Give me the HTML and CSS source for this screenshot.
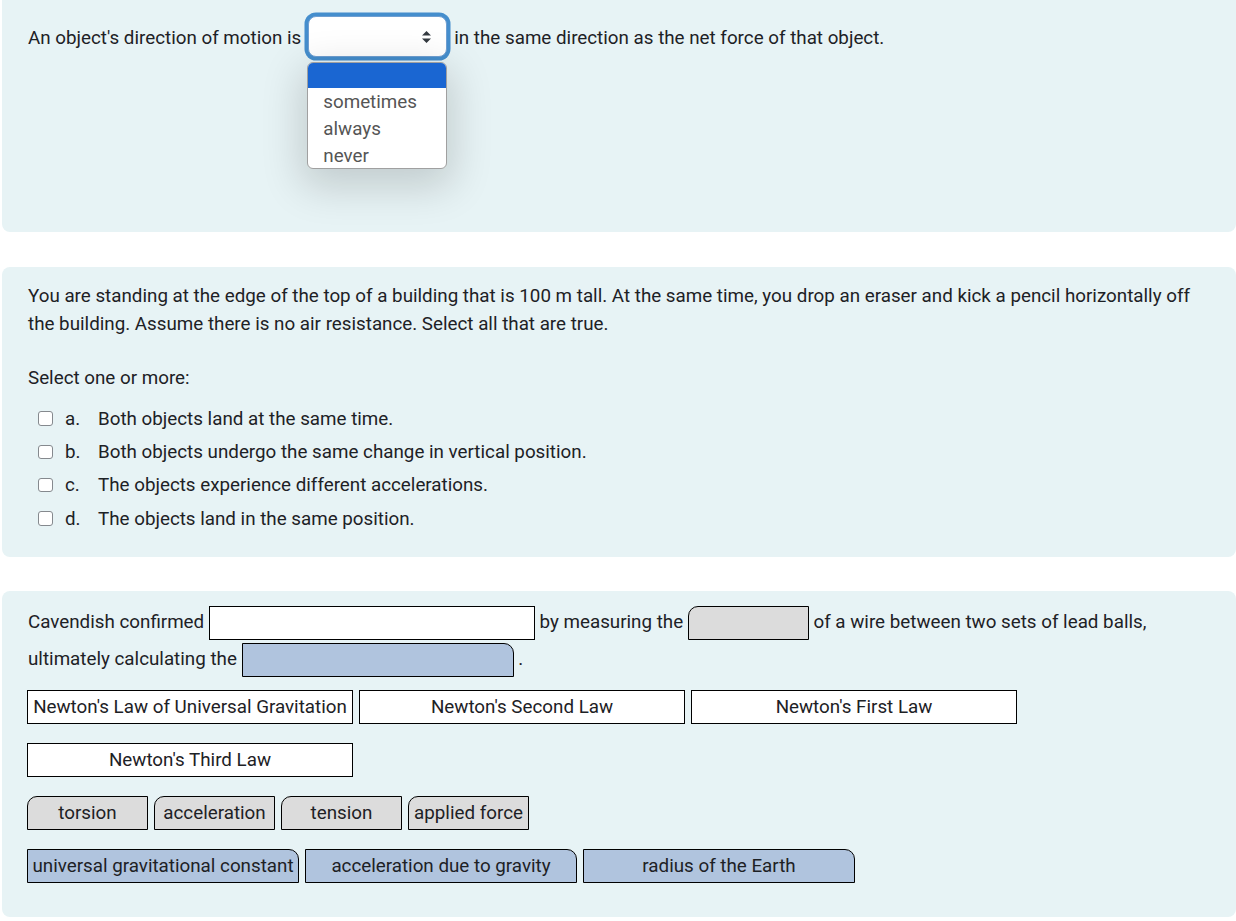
FILE: index.html
```html
<!DOCTYPE html>
<html lang="en">
<head>
  <meta charset="UTF-8" />
  <meta name="viewport" content="width=device-width, initial-scale=1.0"/>
  <title>Quiz</title>
  <link rel="stylesheet" href="styles.css">
</head>
<body>

  <!-- Question 1: select menu -->
  <div class="que que-first">
    <div class="formulation">
      An object's direction of motion is<span class="select-wrap"><span class="select"><svg class="arrows" width="9" height="12" viewBox="0 0 9 12"><path d="M4.5 0 L9 4.6 L0 4.6 Z M0 7.4 L9 7.4 L4.5 12 Z" fill="#343a40"/></svg></span><ul class="dropdown">
          <li class="active"></li>
          <li>sometimes</li>
          <li>always</li>
          <li>never</li>
        </ul></span>in the same direction as the net force of that object.
    </div>
  </div>

  <!-- Question 2: multiple choice -->
  <div class="que que-mid">
    <div class="formulation">
      <p class="qtext">You are standing at the edge of the top of a building that is 100 m tall. At the same time, you drop an eraser and kick a pencil horizontally off the building. Assume there is no air resistance. Select all that are true.</p>
      <p class="prompt">Select one or more:</p>
      <div class="answer">
        <div class="opt"><span class="check"></span><span class="letter">a.</span><span>Both objects land at the same time.</span></div>
        <div class="opt"><span class="check"></span><span class="letter">b.</span><span>Both objects undergo the same change in vertical position.</span></div>
        <div class="opt"><span class="check"></span><span class="letter">c.</span><span>The objects experience different accelerations.</span></div>
        <div class="opt"><span class="check"></span><span class="letter">d.</span><span>The objects land in the same position.</span></div>
      </div>
    </div>
  </div>

  <!-- Question 3: drag words into text -->
  <div class="que que-last">
    <div class="formulation">
      <p class="ddtext">Cavendish confirmed <span class="drop group1"></span> by measuring the <span class="drop group2"></span> of a wire between two sets of lead balls, ultimately calculating the <span class="drop group3"></span> .</p>
      <div class="draghomes">
        <div class="dragrow">
          <span class="drag group1">Newton's Law of Universal Gravitation</span>
          <span class="drag group1">Newton's Second Law</span>
          <span class="drag group1">Newton's First Law</span>
        </div>
        <div class="dragrow">
          <span class="drag group1">Newton's Third Law</span>
        </div>
        <div class="dragrow">
          <span class="drag group2">torsion</span>
          <span class="drag group2">acceleration</span>
          <span class="drag group2">tension</span>
          <span class="drag group2">applied force</span>
        </div>
        <div class="dragrow">
          <span class="drag group3">universal gravitational constant</span>
          <span class="drag group3">acceleration due to gravity</span>
          <span class="drag group3">radius of the Earth</span>
        </div>
      </div>
    </div>
  </div>

</body>
</html>
```

FILE: styles.css
```css
* { margin: 0; padding: 0; box-sizing: border-box; }
body {
  background: #fff; color: #1d2125; padding: 0 0 0 2px;
  font-family: Roboto, "Noto Sans", sans-serif; font-size: 18.8px; line-height: 28px;
}

.que {
  background: #e7f3f5; border-radius: 8px; margin-bottom: 35px;
  padding: 15px 26px 22px;
}
.que-first { height: 232px; padding-top: 16px; border-radius: 0 0 8px 8px; }
.que-mid { height: 290px; margin-bottom: 34px; }
.que-last { height: 326px; padding-top: 13px; margin-bottom: 0; }

/* select with open menu */
.select-wrap {
  position: relative; display: inline-block; vertical-align: -13px;
  margin: 0 7px 0 7px;
}
.select {
  display: block; width: 139px; height: 41px; background: #fff;
  border: 1px solid #6f9fd2; border-radius: 8px;
  box-shadow: 0 0 0 3.5px rgba(15, 108, 191, 0.75);
  position: relative;
}
.arrows { position: absolute; right: 15px; top: 14px; }
.dropdown {
  position: absolute; top: 46px; left: -1px; width: 140px; z-index: 5;
  list-style: none; background: #fff; border: 1px solid #a0a0a0; border-radius: 6px;
  overflow: hidden; box-shadow: 0 12px 40px 6px rgba(0, 0, 0, 0.16);
}
.dropdown li { height: 27px; line-height: 29px; padding-left: 15px; color: #555; }
.dropdown li.active { background: #1a66d2; height: 25px; }
.dropdown li:last-child { height: 26px; }

/* multiple choice */
.qtext { margin-bottom: 26px; }
.prompt { margin-bottom: 10px; }
.opt { display: flex; align-items: center; height: 33.3px; padding-left: 10px; }
.check {
  width: 14.5px; height: 14.5px; border: 1.5px solid #85898e; border-radius: 3px;
  background: #fff; margin-right: 12.5px;
}
.letter { width: 33px; }

/* drag and drop */
.ddtext { line-height: 37px; }
.drop {
  display: inline-block; height: 34px; vertical-align: middle;
  border: 1px solid #000;
}
.group1 { background: #fff; width: 326px; }
.group2 { background: #dcdcdc; width: 121px; border-top-left-radius: 10px; }
.group3 { background: #b0c4de; width: 272px; border-top-right-radius: 10px; }

.draghomes { display: flex; flex-direction: column; gap: 19px; margin: 12px 0 0 -1px; }
.dragrow { display: flex; gap: 6px; }
.drag {
  display: block; height: 34px; line-height: 32px; text-align: center;
  border: 1px solid #000; white-space: nowrap;
}
```
